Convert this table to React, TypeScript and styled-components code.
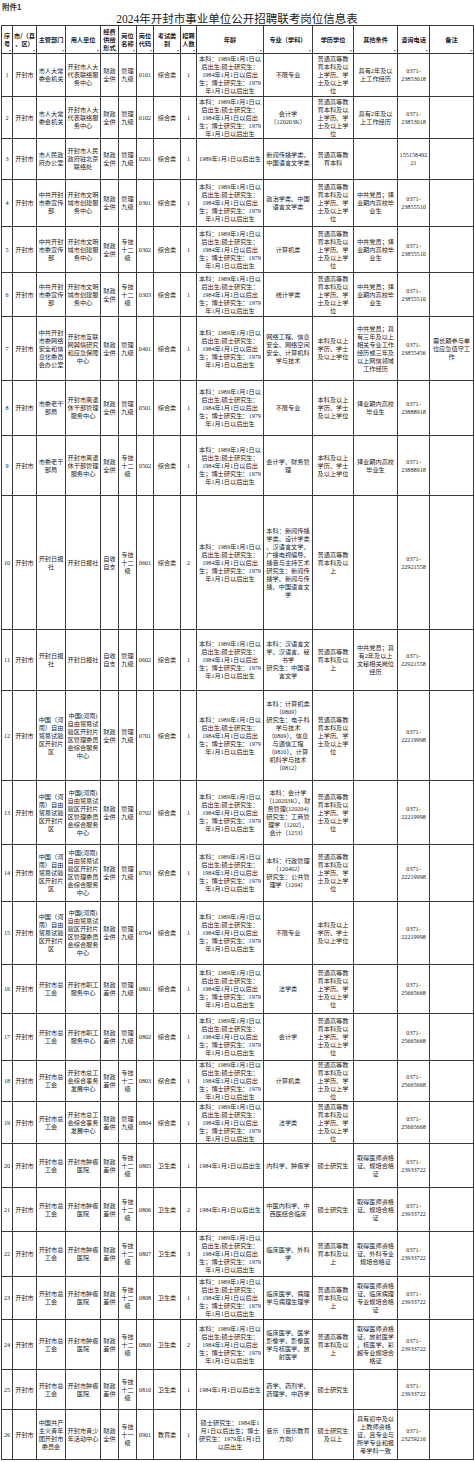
import React from "react";
import styled, { createGlobalStyle, css } from "styled-components";

const GlobalStyle = createGlobalStyle`
  html, body { margin: 0; padding: 0; background: #fff; }
  body {
    font-family: "Liberation Serif", "Noto Sans CJK SC", serif;
    color: #1c1c1c;
  }
`;

const Page = styled.div`
  width: 474px;
`;

const Attachment = styled.div`
  height: 13px;
  line-height: 13px;
  padding-left: 2px;
  font-family: "Noto Sans CJK SC", sans-serif;
  font-weight: 700;
  font-size: 7.5px;
  color: #333;
`;

const Title = styled.h1`
  margin: 0;
  height: 12px;
  line-height: 12px;
  text-align: center;
  font-size: 11.5px;
  font-weight: 400;
  color: #1c1c1c;
`;

const Table = styled.table`
  margin-left: 1px;
  width: 472px;
  border-collapse: collapse;
  table-layout: fixed;
  font-size: 6.2px;
  line-height: 8px;
`;

const Col = styled.col<{ $w: number }>`
  width: ${(p) => p.$w}px;
`;

const Row = styled.tr<{ $h: number }>`
  height: ${(p) => p.$h}px;
`;

const HeadCell = styled.th<{ $px: number }>`
  position: relative;
  border: 1px solid #3a3a3a;
  padding: 0 ${(p) => p.$px}px;
  font-family: "Noto Sans CJK SC", sans-serif;
  font-weight: 700;
  text-align: center;
  vertical-align: middle;
  white-space: pre-line;
  color: #222;
  &::after {
    content: "";
    position: absolute;
    right: 1px;
    bottom: 1px;
    border-left: 1.5px solid transparent;
    border-right: 1.5px solid transparent;
    border-top: 2px solid #777;
  }
`;

const Cell = styled.td<{ $px: number; $anywhere?: boolean }>`
  border: 1px solid #3a3a3a;
  padding: 0 ${(p) => p.$px}px;
  text-align: center;
  vertical-align: middle;
  white-space: pre-line;
  ${(p) =>
    p.$anywhere &&
    css`
      line-break: anywhere;
    `}
`;

const cols = [
  { w: 11, px: 0 },
  { w: 24, px: 1 },
  { w: 29, px: 1 },
  { w: 35, px: 1 },
  { w: 18, px: 1 },
  { w: 18, px: 1 },
  { w: 17, px: 0 },
  { w: 27, px: 1 },
  { w: 16, px: 1 },
  { w: 67, px: 1 },
  { w: 49, px: 1 },
  { w: 41, px: 2 },
  { w: 44, px: 2 },
  { w: 32, px: 0 },
  { w: 44, px: 2 },
];

const headers = [
  "序\n号",
  "市/（县\n、区）",
  "主管部门",
  "用人单位",
  "经费\n供给\n形式",
  "岗位\n名称",
  "岗位\n代码",
  "考试类\n别",
  "招聘\n人数",
  "年龄",
  "专业（学科）",
  "学历学位",
  "其他条件",
  "咨询电话",
  "备注",
];

const A =
  "本科：1989年1月1日以后出生;硕士研究生：1984年1月1日以后出生；博士研究生：1979年1月1日以后出生";
const B = "1989年1月1日以后出生";
const C = "1984年1月1日以后出生";
const D = "硕士研究生：1984年1月1日以后出生；博士研究生：1979年1月1日以后出生";

const E1 = "普通高等教育本科及以上学历、学士及以上学位";
const E3 = "本科及以上学历、学士及以上学位";
const E4 = "普通高等教育本科及以上";

type RowData = {
  h: number;
  dept: string;
  unit: string;
  fund: string;
  post: string;
  code: string;
  cat: string;
  num: string;
  age: string;
  major: string;
  edu: string;
  other: string;
  phone: string;
  note?: string;
  majorAny?: boolean;
  otherAny?: boolean;
};

const RD = "市人大常委会机关";
const RU = "开封市人大代表联络服务中心";
const XD = "中共开封市委宣传部";
const XU = "开封市文明城市创建服务中心";
const XO = "中共党员；择业期内高校毕业生";
const LD = "市委老干部局";
const LU = "开封市离退休干部管理服务中心";
const ZD = "中国（河南）自由贸易试验区开封片区";
const ZU = "中国(河南)自由贸易试验区开封片区管理委员会综合服务中心";
const GD = "开封市总工会";
const HU = "开封市肿瘤医院";

const rows: RowData[] = [
  { h: 43, dept: RD, unit: RU, fund: "财政全供", post: "管理九级", code: "0101", cat: "综合类", num: "1", age: A, major: "不限专业", edu: E1, other: "具有2年及以上工作经历", phone: "0371-\n23853018" },
  { h: 42, dept: RD, unit: RU, fund: "财政全供", post: "管理九级", code: "0102", cat: "综合类", num: "1", age: A, major: "会计学（120203K）", edu: E1, other: "具有2年及以上工作经历", phone: "0371-\n23853018" },
  { h: 41, dept: "市人民政府办公室", unit: "开封市人民政府驻北京联络处", fund: "财政全供", post: "管理九级", code: "0201", cat: "综合类", num: "1", age: B, major: "新闻传播学类、中国语言文学类", edu: "普通高等教育本科", other: "", phone: "155158492\n21" },
  { h: 47, dept: XD, unit: XU, fund: "财政全供", post: "管理九级", code: "0301", cat: "综合类", num: "1", age: A, major: "政治学类、中国语言文学类", edu: E1, other: XO, phone: "0371-\n23855510" },
  { h: 46, dept: XD, unit: XU, fund: "财政全供", post: "专技十二级", code: "0302", cat: "综合类", num: "1", age: A, major: "计算机类", edu: E1, other: XO, phone: "0371-\n23855510" },
  { h: 44, dept: XD, unit: XU, fund: "财政全供", post: "专技十二级", code: "0303", cat: "综合类", num: "1", age: A, major: "统计学类", edu: E1, other: XO, phone: "0371-\n23855510" },
  { h: 64, dept: "中共开封市委网络安全和信息化委员会办公室", unit: "开封市互联网舆情研究和应急保障中心", fund: "财政全供", post: "管理九级", code: "0401", cat: "综合类", num: "1", age: A, major: "网络工程、信息安全、网络空间安全、计算机科学与技术", edu: E3, other: "中共党员；具有三年及以上相关专业工作经历或三年及以上网信领域工作经历", phone: "0371-\n23855456", note: "需长期参与单位应急值守工作" },
  { h: 55, dept: LD, unit: LU, fund: "财政全供", post: "管理九级", code: "0501", cat: "综合类", num: "1", age: A, major: "不限专业", edu: E3, other: "择业期内高校毕业生", phone: "0371-\n23888918" },
  { h: 60, dept: LD, unit: LU, fund: "财政全供", post: "专技十二级", code: "0502", cat: "综合类", num: "1", age: A, major: "会计学、财务管理", edu: E3, other: "择业期内高校毕业生", phone: "0371-\n23888918" },
  { h: 134, dept: "开封日报社", unit: "开封日报社", fund: "自收自支", post: "专技十二级", code: "0601", cat: "综合类", num: "2", age: A, major: "本科：新闻传播学类、设计学类、汉语言文学、广播电视编导、播音与主持艺术\n研究生：新闻传播学、新闻与传播、中国语言文学", majorAny: true, edu: E4, other: "", phone: "0371-\n22921558" },
  { h: 61, dept: "开封日报社", unit: "开封日报社", fund: "自收自支", post: "管理九级", code: "0602", cat: "综合类", num: "1", age: A, major: "本科：汉语言文学、汉语言、秘书学\n研究生：中国语言文学", edu: E4, other: "中共党员；具有2年及以上文秘相关岗位经历", phone: "0371-\n22921558" },
  { h: 90, dept: ZD, unit: ZU, fund: "财政全供", post: "管理九级", code: "0701", cat: "综合类", num: "1", age: A, major: "本科：计算机类（0809）\n研究生：电子科学与技术（0809）、信息与通信工程（0810）、计算机科学与技术（0812）", edu: E1, other: "", phone: "0371-\n22219998" },
  { h: 64, dept: ZD, unit: ZU, fund: "财政全供", post: "管理九级", code: "0702", cat: "综合类", num: "1", age: A, major: "本科：会计学（120203K）、财务管理(120204)\n研究生：工商管理学（1202）、会计（1253）", edu: E1, other: "", phone: "0371-\n22219998" },
  { h: 57, dept: ZD, unit: ZU, fund: "财政全供", post: "管理九级", code: "0703", cat: "综合类", num: "1", age: A, major: "本科：行政管理（120402）\n研究生：公共管理学（1204）", edu: E1, other: "", phone: "0371-\n22219998" },
  { h: 63, dept: ZD, unit: ZU, fund: "财政全供", post: "管理九级", code: "0704", cat: "综合类", num: "1", age: A, major: "不限专业", edu: E3, other: "", phone: "0371-\n22219998" },
  { h: 49, dept: GD, unit: "开封市职工服务中心", fund: "财政差供", post: "管理九级", code: "0801", cat: "综合类", num: "1", age: A, major: "法学类", edu: E1, other: "", phone: "0371-\n25665668" },
  { h: 47, dept: GD, unit: "开封市职工服务中心", fund: "财政差供", post: "管理九级", code: "0802", cat: "综合类", num: "1", age: A, major: "会计学", edu: E1, other: "", phone: "0371-\n25665668" },
  { h: 40, dept: GD, unit: "开封市总工会综合事务发展中心", fund: "财政差供", post: "专技十二级", code: "0803", cat: "综合类", num: "1", age: A, major: "计算机类", edu: E1, other: "", phone: "0371-\n25665668" },
  { h: 42, dept: GD, unit: "开封市总工会综合事务发展中心", fund: "财政差供", post: "管理九级", code: "0804", cat: "综合类", num: "1", age: A, major: "法学类", edu: E1, other: "", phone: "0371-\n25665668" },
  { h: 44, dept: GD, unit: HU, fund: "财政差供", post: "专技十二级", code: "0805", cat: "卫生类", num: "1", age: C, major: "内科学、肿瘤学", edu: "硕士研究生", other: "取得医师资格证、规培合格证", phone: "0371-\n23933722" },
  { h: 44, dept: GD, unit: HU, fund: "财政差供", post: "专技十二级", code: "0806", cat: "卫生类", num: "2", age: C, major: "中医内科学、中西医结合临床", edu: "硕士研究生", other: "取得医师资格证、规培合格证", phone: "0371-\n23933722" },
  { h: 45, dept: GD, unit: HU, fund: "财政差供", post: "专技十二级", code: "0807", cat: "卫生类", num: "3", age: A, major: "临床医学、外科学", edu: E4, other: "取得医师资格证、外科专业规培合格证", phone: "0371-\n23933722" },
  { h: 43, dept: GD, unit: HU, fund: "财政差供", post: "专技十二级", code: "0808", cat: "卫生类", num: "1", age: A, major: "临床医学、病理学与病理生理学", edu: E4, other: "取得医师资格证、临床病理专业规培合格证", phone: "0371-\n23933722" },
  { h: 50, dept: GD, unit: HU, fund: "财政差供", post: "专技十二级", code: "0809", cat: "卫生类", num: "2", age: A, major: "临床医学、医学影像学、影像医学与核医学、放射医学", edu: E4, other: "取得医师资格证，放射医学、核医学、彩超专业规培合格证", otherAny: true, phone: "0371-\n23933722" },
  { h: 40, dept: GD, unit: HU, fund: "财政差供", post: "专技十二级", code: "0810", cat: "卫生类", num: "1", age: C, major: "药学、药剂学、药理学、中药学", edu: "硕士研究生", other: "", phone: "0371-\n23933722" },
  { h: 50, dept: "中国共产主义青年团开封市委员会", unit: "开封市青少年活动中心", fund: "财政全供", post: "专技十一级", code: "0901", cat: "教育类", num: "1", age: D, major: "音乐（音乐教育方向）", edu: "硕士研究生及以上", other: "具有初中及以上教师资格证，且专业与所学专业和报考学科一致", phone: "0371-\n23259216" },
];

export default function App() {
  return (
    <Page>
      <GlobalStyle />
      <Attachment>附件1</Attachment>
      <Title>2024年开封市事业单位公开招聘联考岗位信息表</Title>
      <Table>
        <colgroup>
          {cols.map((c, i) => (
            <Col key={i} $w={c.w} />
          ))}
        </colgroup>
        <thead>
          <Row $h={28}>
            {headers.map((h, i) => (
              <HeadCell key={i} $px={cols[i].px}>
                {h}
              </HeadCell>
            ))}
          </Row>
        </thead>
        <tbody>
          {rows.map((r, idx) => {
            const values = [
              String(idx + 1),
              "开封市",
              r.dept,
              r.unit,
              r.fund,
              r.post,
              r.code,
              r.cat,
              r.num,
              r.age,
              r.major,
              r.edu,
              r.other,
              r.phone,
              r.note ?? "",
            ];
            return (
              <Row key={idx} $h={r.h}>
                {values.map((v, i) => (
                  <Cell
                    key={i}
                    $px={cols[i].px}
                    $anywhere={(i === 10 && r.majorAny) || (i === 12 && r.otherAny)}
                  >
                    {v}
                  </Cell>
                ))}
              </Row>
            );
          })}
        </tbody>
      </Table>
    </Page>
  );
}
